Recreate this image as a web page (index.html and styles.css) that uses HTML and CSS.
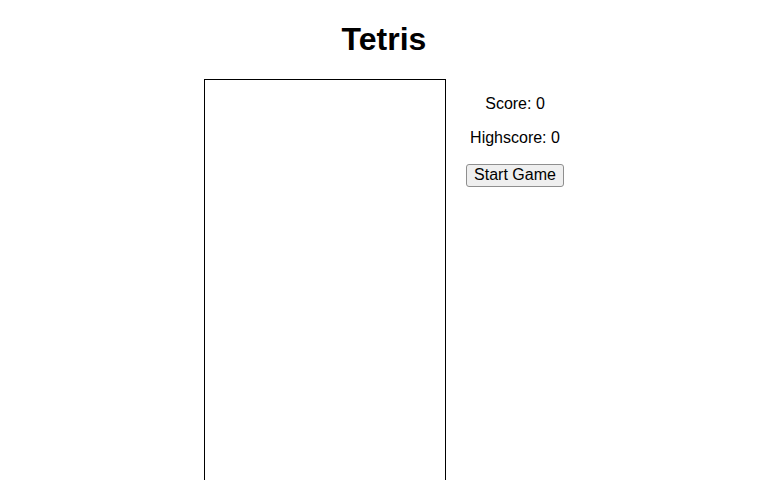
FILE: index.html
```html
<!DOCTYPE html>
<html>
<head>
<meta charset="utf-8">
<title>Tetris</title>
<link rel="stylesheet" href="styles.css">
</head>
<body>
<h1 class="title">Tetris</h1>
<div class="game">
  <div class="board"></div>
  <div class="sidebar">
    <p class="stat">Score: 0</p>
    <p class="stat">Highscore: 0</p>
    <button class="start">Start Game</button>
  </div>
</div>
</body>
</html>
```
FILE: styles.css
```css
html, body {
  background: #fff;
}
body {
  margin: 0 8px 8px;
  font-family: "Liberation Sans", Arial, sans-serif;
  font-size: 16px;
  color: #000;
}
.title {
  text-align: center;
  font-size: 32px;
  font-weight: bold;
  margin: 21px 0;
}
.game {
  display: flex;
  justify-content: center;
  gap: 20px;
  align-items: flex-start;
}
.board {
  width: 240px;
  height: 400px;
  border: 1px solid #000;
  background: #fff;
}
.sidebar {
  display: flex;
  flex-direction: column;
  align-items: center;
  text-align: center;
}
.stat {
  margin: 16px 0 0;
}
.start {
  margin-top: 17px;
  font-family: "Liberation Sans", Arial, sans-serif;
  font-size: 16px;
  padding: 1px 7px 2px;
  border: 1px solid #8f8f8f;
  border-radius: 3px;
  background: #efefef;
  color: #000;
}
```
